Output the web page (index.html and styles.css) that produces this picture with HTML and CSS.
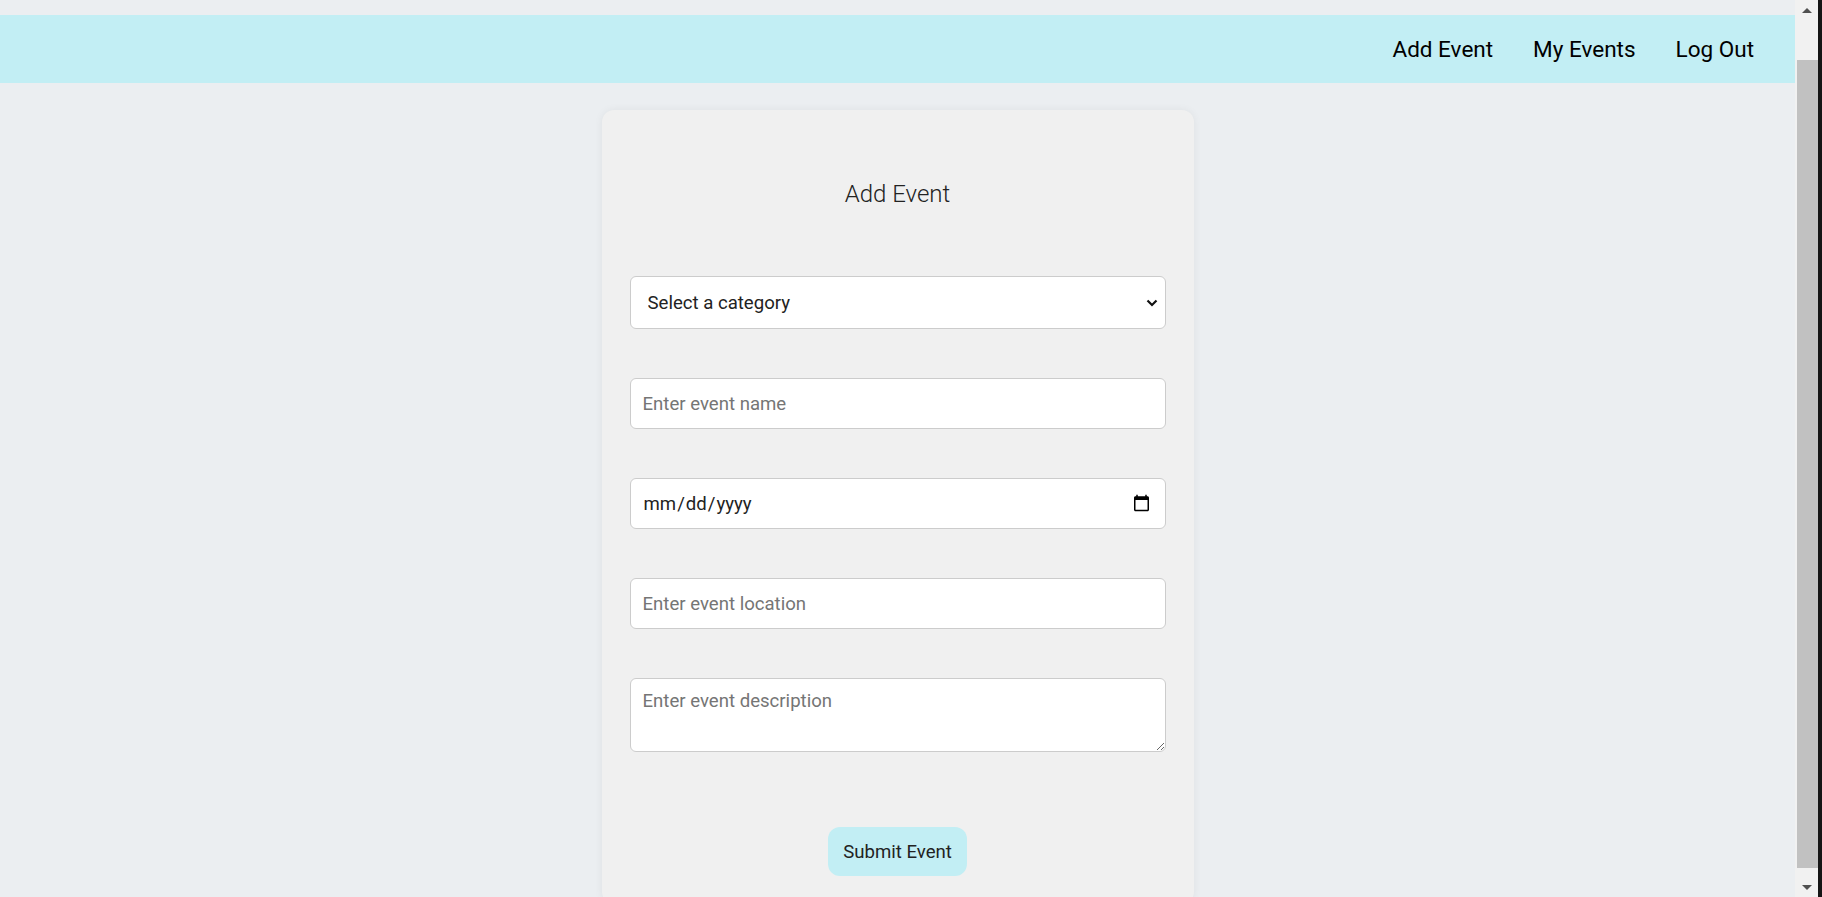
FILE: index.html
```html
<!DOCTYPE html>
<html lang="en">
<head>
    <meta charset="UTF-8">
    <meta name="viewport" content="width=device-width, initial-scale=1.0">
    <title>Add Event</title>
    <link rel="stylesheet" href="styles.css">
</head>
<body>
    <div class="page">
        <!-- Navigation -->
        <nav class="navbar">
            <a href="add-event.html">Add Event</a>
            <a href="my-events.html">My Events</a>
            <a href="logout.html">Log Out</a>
        </nav>

        <!-- Add Event Form -->
        <div class="card">
            <h2>Add Event</h2>
            <form class="event-form" onsubmit="return submitEvent(event)">
                <div class="select-wrap">
                    <select id="category" required>
                        <option value="">Select a category</option>
                        <option value="music">Music</option>
                        <option value="sports">Sports</option>
                        <option value="tech">Tech</option>
                        <option value="art">Art</option>
                    </select>
                    <svg class="chevron" width="12" height="8" viewBox="0 0 12 8">
                        <path d="M1.5 1.5 L6 6 L10.5 1.5" fill="none" stroke="#111" stroke-width="2.2"/>
                    </svg>
                </div>
                <input type="text" id="name" placeholder="Enter event name">
                <input type="date" id="date">
                <input type="text" id="location" placeholder="Enter event location">
                <textarea id="description" placeholder="Enter event description"></textarea>
                <button type="submit" class="submit-btn">Submit Event</button>
            </form>
        </div>
    </div>

    <!-- Window scrollbar -->
    <div class="scrollbar">
        <div class="sb-btn"><span class="arrow-up"></span></div>
        <div class="sb-thumb"></div>
        <div class="sb-btn"><span class="arrow-down"></span></div>
    </div>

    <script>
        // Simple check before sending
        function submitEvent(e) {
            e.preventDefault();
            const name = document.getElementById('name').value;
            if (name.trim() === "") {
                alert('Please enter an event name.');
                return false;
            }
            alert("Event added!");
            return false;
        }
    </script>
</body>
</html>
```

FILE: styles.css
```css
/* Basic Styles */
body {
    margin: 0;
    display: flex;
    background: #ebeef1;
    font-family: Roboto, "Liberation Sans", Arial, sans-serif;
    color: #222;
}

.page {
    flex: 1;
    padding-top: 15px;
}

/* Scrollbar column */
.scrollbar {
    box-sizing: border-box;
    width: 27px;
    height: 100vh;
    flex-shrink: 0;
    display: flex;
    flex-direction: column;
    background: #f1f1f1;
    border-right: 4px solid #151515;
}

.sb-btn {
    height: 20px;
    display: flex;
    justify-content: center;
    align-items: center;
}

.arrow-up,
.arrow-down {
    width: 0;
    height: 0;
    border-left: 5px solid transparent;
    border-right: 5px solid transparent;
}

.arrow-up {
    border-bottom: 5px solid #505050;
}

.arrow-down {
    border-top: 5px solid #505050;
}

.sb-thumb {
    flex: 1;
    margin: 40px 0 9px 2px;
    background: #c1c1c1;
}

/* Navbar */
.navbar {
    height: 68px;
    background: #c2eef4;
    display: flex;
    justify-content: flex-end;
    align-items: center;
    padding-right: 21px;
}

.navbar a {
    padding: 0 20px;
    font-size: 22.5px;
    color: #000;
    text-decoration: none;
}

.navbar a:hover {
    text-decoration: underline;
}

/* Card */
.card {
    box-sizing: border-box;
    width: 592px;
    margin: 27px auto 47px;
    padding: 28px;
    background: #f0f0f0;
    border-radius: 12px;
    box-shadow: 0 0 8px rgba(0, 0, 0, 0.06);
}

.card h2 {
    margin: 42px 0 68px;
    font-size: 24px;
    line-height: 28px;
    font-weight: 300;
    text-align: center;
    color: #222;
}

/* Form */
.event-form {
    display: flex;
    flex-direction: column;
    gap: 49px;
}

.event-form select,
.event-form input,
.event-form textarea {
    box-sizing: border-box;
    width: 100%;
    margin: 0;
    padding: 0 12px;
    border: 1px solid #ccc;
    border-radius: 6px;
    background: #fff;
    font-family: inherit;
    font-size: 18.6px;
    font-weight: 400;
    color: #222;
}

.select-wrap {
    position: relative;
}

.event-form select {
    display: block;
    height: 53px;
    padding-left: 17px;
    appearance: none;
    -webkit-appearance: none;
}

.chevron {
    position: absolute;
    right: 8px;
    top: 23px;
    pointer-events: none;
}

.event-form input {
    height: 51px;
}

.event-form textarea {
    height: 74px;
    padding-top: 11px;
    resize: vertical;
}

.event-form ::placeholder {
    color: #757575;
}

.submit-btn {
    align-self: center;
    height: 49px;
    margin-top: 26px;
    padding: 0 15px;
    border: none;
    border-radius: 12px;
    background: #c2eef4;
    font-family: inherit;
    font-size: 18.6px;
    color: #222;
    cursor: pointer;
}

.submit-btn:hover {
    background: #a9e4ec;
}
```
